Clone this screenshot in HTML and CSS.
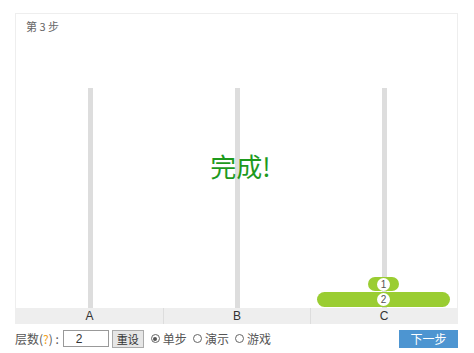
FILE: index.html
```html
<!DOCTYPE html>
<html>
<head>
<meta charset="utf-8">
<link rel="stylesheet" href="styles.css">
</head>
<body>
<div class="app">
  <div class="board">
    <div class="step">第 3 步</div>
    <div class="done">完成!</div>
    <div class="pegs">
      <div class="peg">
        <div class="stack"><div class="pole"></div></div>
        <div class="label">A</div>
      </div>
      <div class="peg">
        <div class="stack"><div class="pole"></div></div>
        <div class="label">B</div>
      </div>
      <div class="peg">
        <div class="stack">
          <div class="pole"></div>
          <div class="disks">
            <div class="disk d1"><span>1</span></div>
            <div class="disk d2"><span>2</span></div>
          </div>
        </div>
        <div class="label">C</div>
      </div>
    </div>
  </div>
  <div class="controls">
    <span class="lbl">层数(<span class="q">?</span>) :</span>
    <input class="num" type="text" value="2">
    <button class="reset">重设</button>
    <label class="radio"><span class="dot on"></span>单步</label>
    <label class="radio"><span class="dot"></span>演示</label>
    <label class="radio"><span class="dot"></span>游戏</label>
    <button class="next">下一步</button>
  </div>
</div>
</body>
</html>
```
FILE: styles.css
```css
* { box-sizing: border-box; }
html, body { margin: 0; padding: 0; background: #fff; }
body { font-family: "Noto Sans CJK SC", "Noto Sans", sans-serif; color: #333; }
.app { padding: 13px 16px 0 15px; width: 474px; }
.board {
  position: relative;
  height: 311px;
  border: 1px solid #eee;
  border-bottom: none;
  display: flex;
  flex-direction: column;
  justify-content: flex-end;
}
.step {
  position: absolute;
  left: 10px;
  top: 4px;
  font-size: 11px;
  color: #666;
}
.done {
  position: absolute;
  left: 8px; right: 0;
  top: 134px;
  text-align: center;
  font-size: 26px;
  color: #1d9a1d;
  line-height: 36px;
  z-index: 2;
}
.pegs { display: flex; }
.peg { flex: 1; display: flex; flex-direction: column; }
.peg + .peg .label { border-left: 1px solid #ddd; }
.stack {
  position: relative;
  height: 220px;
  display: flex;
  justify-content: center;
  align-items: flex-end;
}
.pole {
  position: absolute;
  left: 50%;
  margin-left: -2px;
  width: 5px;
  top: 0; bottom: 0;
  background: #ddd;
}
.disks {
  position: relative;
  display: flex;
  flex-direction: column;
  align-items: center;
  gap: 1px;
  padding-bottom: 1px;
}
.disk {
  height: 15px;
  border-radius: 8px;
  background: #9acd32;
  display: flex;
  justify-content: center;
  align-items: center;
}
.d1 { width: 31px; height: 14px; }
.d2 { width: 133px; }
.disk span {
  width: 13px; height: 13px;
  border-radius: 50%;
  background: #fff;
  color: #555;
  font-family: "Liberation Sans", sans-serif;
  font-size: 10px;
  line-height: 13px;
  text-align: center;
}
.label {
  height: 16px;
  background: #eee;
  text-align: center;
  font-family: "Liberation Sans", sans-serif;
  font-size: 12px;
  line-height: 16px;
  color: #333;
}
.controls {
  display: flex;
  align-items: center;
  height: 29px;
  font-size: 12px;
  color: #555;
}
.lbl { margin-right: 4px; }
.q { color: #f0a020; }
.num {
  width: 46px; height: 17px;
  border: 1px solid #999;
  font-family: "Liberation Sans", sans-serif;
  font-size: 12px;
  padding: 0 0 0 12px;
  color: #333;
}
.reset {
  margin-left: 3px;
  height: 18px;
  width: 32px;
  padding: 0;
  border: 1px solid #aaa;
  background: #e6e6e6;
  font-size: 11px;
  color: #333;
  font-family: "Noto Sans CJK SC", sans-serif;
}
.radio { display: flex; align-items: center; margin-left: 7px; }
.radio + .radio { margin-left: 6px; }
.dot {
  width: 9px; height: 9px;
  border: 1px solid #666;
  border-radius: 50%;
  margin-right: 3px;
  position: relative;
}
.dot.on::after {
  content: "";
  position: absolute;
  left: 1.5px; top: 1.5px;
  width: 4px; height: 4px;
  border-radius: 50%;
  background: #555;
}
.next {
  margin-left: auto;
  width: 59px;
  height: 18px;
  border: none;
  background: #4d95d1;
  color: #fff;
  font-size: 12px;
  padding: 0;
  font-family: "Noto Sans CJK SC", sans-serif;
}
```
